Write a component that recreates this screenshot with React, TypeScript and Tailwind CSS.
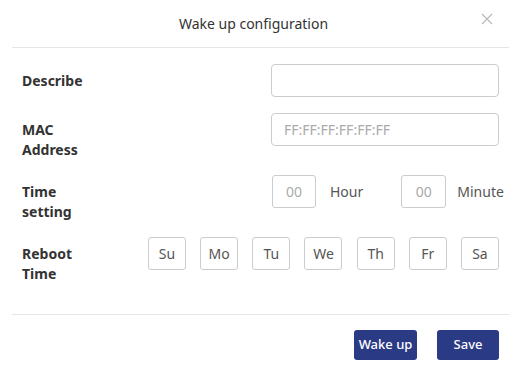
import React from 'react';

const days = ['Su', 'Mo', 'Tu', 'We', 'Th', 'Fr', 'Sa'];

const FieldLabel: React.FC<{ lines: string[] }> = ({ lines }) => (
    <div className="w-[126px] shrink-0 pt-[7px] text-[14px] leading-[20px] font-bold text-[#333]">
        {lines.map((l) => (
            <div key={l}>{l}</div>
        ))}
    </div>
);

export default function App() {
    return (
        <div
            className="w-[521px] h-[372px] bg-white overflow-hidden"
            style={{ fontFamily: '"Noto Sans", "Open Sans", sans-serif' }}
        >
            {/* Header */}
            <div className="relative mx-3 h-[48px] flex items-center justify-center pr-[14px] border-b border-[#e5e5e5]">
                <span className="text-[14px] text-[#333]">Wake up configuration</span>
                <button className="absolute right-[16px] top-[13px] text-[#bbb]" aria-label="Close">
                    <svg width="12" height="12" viewBox="0 0 12 12" fill="none" stroke="currentColor" strokeWidth="1.3">
                        <path d="M1 1L11 11M11 1L1 11" />
                    </svg>
                </button>
            </div>

            {/* Body */}
            <div className="px-[22px] pt-[16px]">
                <div className="flex items-start mb-[16px]">
                    <div className="w-[126px] shrink-0 h-[33px] flex items-center text-[14px] font-bold text-[#333]">Describe</div>
                    <input className="ml-auto w-[228px] h-[33px] border border-[#ccc] rounded-[4px] px-3 text-[14px] outline-none" />
                </div>

                <div className="flex items-start mb-[15px]">
                    <FieldLabel lines={['MAC', 'Address']} />
                    <input
                        placeholder="FF:FF:FF:FF:FF:FF"
                        className="ml-auto w-[228px] h-[33px] border border-[#ccc] rounded-[4px] px-3 text-[14px] placeholder:text-[#aaa] outline-none"
                    />
                </div>

                <div className="flex items-start mb-[15px]">
                    <FieldLabel lines={['Time', 'setting']} />
                    <div className="flex items-center pl-[124px] whitespace-nowrap">
                        <input
                            placeholder="00"
                            className="w-[44px] h-[33px] border border-[#ccc] rounded-[3px] text-center text-[14px] placeholder:text-[#aaa] outline-none"
                        />
                        <span className="ml-[14px] text-[14px] text-[#555]">Hour</span>
                        <input
                            placeholder="00"
                            className="ml-[38px] w-[45px] h-[33px] border border-[#ccc] rounded-[3px] text-center text-[14px] placeholder:text-[#aaa] outline-none"
                        />
                        <span className="ml-[11px] text-[14px] text-[#555]">Minute</span>
                    </div>
                </div>

                <div className="flex items-start">
                    <FieldLabel lines={['Reboot', 'Time']} />
                    <div className="flex flex-1 justify-between">
                        {days.map((d) => (
                            <button
                                key={d}
                                className="w-[38px] h-[33px] border border-[#ccc] rounded-[3px] text-[14px] text-[#555] bg-white"
                            >
                                {d}
                            </button>
                        ))}
                    </div>
                </div>
            </div>

            {/* Footer */}
            <div className="mx-3 mt-[30px] border-t border-[#e5e5e5] flex justify-end gap-[20px] pt-[15px] pr-[10px]">
                <button className="w-[63px] h-[30px] rounded-[3px] bg-[#2b3a85] text-white text-[13px] font-medium">Wake up</button>
                <button className="w-[62px] h-[30px] rounded-[3px] bg-[#2b3a85] text-white text-[13px] font-medium">Save</button>
            </div>
        </div>
    );
}
